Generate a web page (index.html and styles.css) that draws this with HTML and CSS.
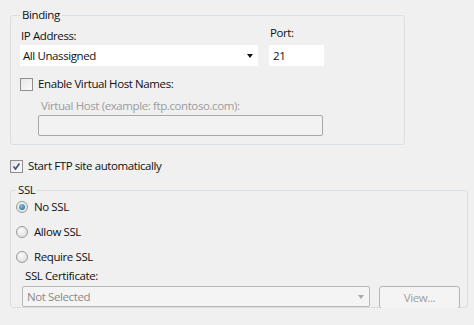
FILE: index.html
```html
<!DOCTYPE html>
<html lang="en">
  <head>
    <meta charset="UTF-8" />
    <title>FTP Site Bindings</title>
    <link rel="stylesheet" href="styles.css">
  </head>
  <body>
    <div class="page">
      <fieldset class="group binding">
        <legend>Binding</legend>
        <div class="ip-row">
          <div class="field ip">
            <label>IP Address:</label>
            <div class="select">
              <span>All Unassigned</span>
              <span class="arrow"></span>
            </div>
          </div>
          <div class="field port">
            <label class="port-label">Port:</label>
            <div class="textbox">21</div>
          </div>
        </div>
        <div class="check vhost-check">
          <span class="box"></span>
          <span>Enable Virtual Host Names:</span>
        </div>
        <div class="vhost">
          <label class="disabled-label">Virtual Host (example: ftp.contoso.com):</label>
          <div class="textbox disabled"></div>
        </div>
      </fieldset>

      <div class="check autostart">
        <span class="box checked">
          <svg width="9" height="9" viewBox="0 0 9 9"><path d="M1.5 4.5 L3.5 7 L7.5 1.5" fill="none" stroke="#3c4f7a" stroke-width="1.6"/></svg>
        </span>
        <span>Start FTP site automatically</span>
      </div>

      <fieldset class="group ssl">
        <legend>SSL</legend>
        <div class="radio">
          <span class="dot on"></span>
          <span>No SSL</span>
        </div>
        <div class="radio">
          <span class="dot"></span>
          <span>Allow SSL</span>
        </div>
        <div class="radio">
          <span class="dot"></span>
          <span>Require SSL</span>
        </div>
        <label class="cert-label">SSL Certificate:</label>
        <div class="cert-row">
          <div class="select disabled">
            <span>Not Selected</span>
            <span class="arrow"></span>
          </div>
          <button class="view" disabled>View...</button>
        </div>
      </fieldset>
    </div>
  </body>
</html>
```

FILE: styles.css
```css
body {
  margin: 0;
  background-color: #f0f0f0;
  font-family: "Open Sans", "Noto Sans", sans-serif;
  font-size: 11.5px;
  letter-spacing: -0.4px;
  color: #111;
}

.page {
  display: flex;
  flex-direction: column;
  align-items: flex-start;
  padding: 8px 0 0 10px;
}

.group {
  margin: 0;
  border: 1px solid #d8dfe4;
  border-radius: 3px;
  box-sizing: border-box;
}

legend {
  padding: 0 2px;
  margin-left: 0;
  line-height: 14px;
}

/* Binding box */
.binding {
  width: 395px;
  height: 137px;
  padding: 0 0 0 9px;
}

.ip-row {
  display: flex;
  gap: 11px;
  margin-top: 7px;
}

.field label {
  display: block;
  line-height: 14px;
  margin: 0 0 2px 1px;
}

.port-label {
  position: relative;
  top: -3px;
}

.select {
  display: flex;
  align-items: center;
  justify-content: space-between;
  box-sizing: border-box;
  height: 21px;
  width: 238px;
  padding: 0 4px 0 2px;
  background-color: #fff;
  border: 1px solid #fff;
}

.arrow {
  width: 0;
  height: 0;
  border-left: 3.5px solid transparent;
  border-right: 3.5px solid transparent;
  border-top: 4px solid #111;
}

.textbox {
  box-sizing: border-box;
  height: 21px;
  width: 55px;
  padding: 0 3px;
  line-height: 19px;
  background-color: #fff;
  border: 1px solid #fff;
}

.textbox.disabled {
  width: 285px;
  background-color: #f2f2f2;
  border: 1px solid #a8a8a8;
  border-radius: 2px;
}

.check,
.radio {
  display: flex;
  align-items: center;
  gap: 5px;
  line-height: 14px;
}

.box {
  display: flex;
  align-items: center;
  justify-content: center;
  width: 11px;
  height: 11px;
  border: 1px solid #8f8f8f;
  background: linear-gradient(135deg, #e6e6e6, #fbfbfb);
  box-sizing: content-box;
}

.vhost-check {
  margin-top: 11px;
}

.vhost {
  margin: 8px 0 0 18px;
}

.disabled-label {
  display: block;
  color: #9c9c9c;
  line-height: 14px;
  margin: 0 0 2px 3px;
}

/* Autostart */
.autostart {
  margin-top: 14px;
}

/* SSL box */
.ssl {
  width: 458px;
  height: 125px;
  margin-top: 10px;
  padding: 3px 0 0 5px;
}

.radio {
  margin-bottom: 11px;
  gap: 6px;
}

.dot {
  width: 10px;
  height: 10px;
  border-radius: 50%;
  border: 1px solid #9a9a9a;
  background: radial-gradient(circle at 40% 35%, #fafafa, #d8d8d8);
  position: relative;
}

.dot.on::after {
  content: "";
  position: absolute;
  top: 2px;
  left: 2px;
  width: 6px;
  height: 6px;
  border-radius: 50%;
  background: radial-gradient(circle at 40% 35%, #7fc4e8, #1c5d8a);
}

.cert-label {
  display: block;
  line-height: 14px;
  margin: -6px 0 3px 9px;
}

.cert-row {
  display: flex;
  gap: 9px;
  margin-left: 6px;
}

.select.disabled {
  width: 348px;
  color: #8a8a8a;
  background-color: #f4f4f4;
  border: 1px solid #b9b9b9;
  border-radius: 2px;
  padding-left: 4px;
  padding-right: 5px;
}

.select.disabled .arrow {
  border-top-color: #a8a8a8;
}

.view {
  width: 81px;
  height: 23px;
  font-family: inherit;
  font-size: inherit;
  letter-spacing: inherit;
  color: #a0a0a0;
  background-color: #f4f4f4;
  border: 1px solid #b5b5b5;
  border-radius: 3px;
}
```
